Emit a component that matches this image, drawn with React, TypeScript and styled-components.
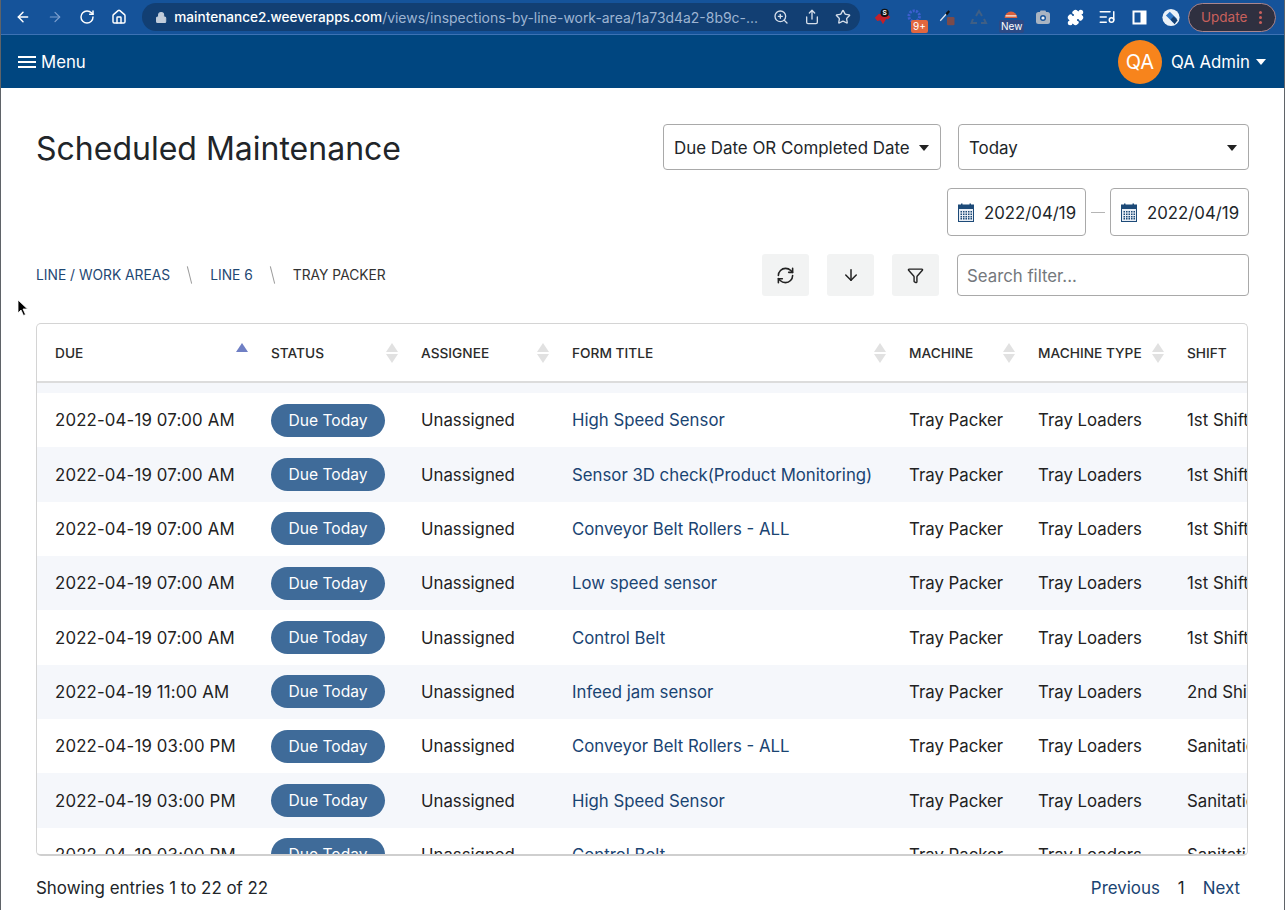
import styled, { createGlobalStyle } from 'styled-components';
import {
    ArrowDown,
    ArrowLeft,
    ArrowRight,
    Filter,
    Home,
    ListMusic,
    Lock,
    Puzzle,
    RefreshCw,
    RotateCw,
    Share,
    Star,
    ZoomIn,
} from 'lucide-react';

const GlobalStyle = createGlobalStyle`
    html, body {
        margin: 0;
        height: 910px;
        overflow: hidden;
        background: #fff;
        font-family: Inter, "Liberation Sans", sans-serif;
        color: #212529;
    }
    * { box-sizing: border-box; }
`;

const Frame = styled.div`
    position: relative;
    width: 1285px;
    height: 910px;
    border-left: 1px solid #5f6368;
    border-right: 1px solid #5f6368;
    overflow: hidden;
`;

const BrowserBar = styled.div`
    height: 35px;
    background: #15539a;
    border-bottom: 1px solid #3d72b4;
    display: flex;
    align-items: center;
    padding-left: 14px;
    color: #fff;
`;

const NavIcon = styled.span<{ $dim?: boolean }>`
    width: 16px;
    height: 16px;
    margin-right: 16px;
    display: flex;
    color: ${(p) => (p.$dim ? '#7c9fcf' : '#fff')};
`;

const Omnibox = styled.div`
    width: 718px;
    height: 28px;
    margin-left: -1px;
    margin-right: 14px;
    border-radius: 14px;
    background: #123f73;
    display: flex;
    align-items: center;
    padding: 0 9px 0 13px;
    font-size: 13.6px;
    white-space: nowrap;
    font-weight: 500;
`;

const Host = styled.span`
    margin-left: 7px;
    color: #fff;
`;

const UrlPath = styled.span`
    flex: 1;
    color: #9db4d2;
    font-size: 13.95px;
    font-weight: 400;
`;

const OmniIcon = styled.span`
    display: flex;
    margin-left: 15px;
    color: #d5deea;
`;

const ExtSlot = styled.span`
    position: relative;
    width: 18px;
    height: 18px;
    margin-right: 14px;
    display: flex;
    align-items: center;
    justify-content: center;
    flex-shrink: 0;
`;

const ExtBadge = styled.span<{ $bg: string; $left: number }>`
    position: absolute;
    left: ${(p) => p.$left}px;
    top: 12px;
    padding: 0 2px;
    border-radius: 2px;
    background: ${(p) => p.$bg};
    color: #fff;
    font-size: 10px;
    line-height: 13px;
    white-space: nowrap;
`;

const UpdateButton = styled.div`
    width: 88px;
    height: 29px;
    margin-left: -6px;
    border: 1.5px solid #a9868e;
    border-radius: 15px;
    background: #2f3040;
    color: #c9605c;
    font-size: 13.5px;
    display: flex;
    align-items: center;
    justify-content: space-between;
    padding: 0 13px 0 12px;
`;

const Dots = styled.span`
    width: 3px;
    height: 3px;
    border-radius: 50%;
    background: #c9605c;
    box-shadow: 0 -5px 0 #c9605c, 0 5px 0 #c9605c;
`;

const TopNav = styled.nav`
    height: 53px;
    background: #004680;
    color: #fff;
    display: flex;
    align-items: center;
    justify-content: space-between;
    padding: 0 18px 0 17px;
    font-size: 16.8px;
`;

const MenuToggle = styled.div`
    display: flex;
    align-items: center;
    gap: 5px;
`;

const Burger = styled.span`
    width: 18px;
    height: 12px;
    border-top: 2px solid #fff;
    border-bottom: 2px solid #fff;
    position: relative;
    &::after {
        content: '';
        position: absolute;
        left: 0;
        right: 0;
        top: 3px;
        height: 2px;
        background: #fff;
    }
`;

const UserBox = styled.div`
    display: flex;
    align-items: center;
`;

const Avatar = styled.span`
    width: 44px;
    height: 44px;
    border-radius: 50%;
    background: #f7841c;
    display: flex;
    align-items: center;
    justify-content: center;
    font-size: 20px;
    margin-right: 9px;
`;

const Caret = styled.span<{ $color?: string }>`
    width: 0;
    height: 0;
    border-left: 5.5px solid transparent;
    border-right: 5.5px solid transparent;
    border-top: 6px solid ${(p) => p.$color ?? '#fff'};
`;

const UserCaret = styled(Caret)`
    margin-left: 6px;
`;

const Main = styled.main`
    padding: 36px 35px 0 35px;
`;

const Heading = styled.div`
    display: flex;
    justify-content: space-between;
    align-items: flex-start;
`;

const Title = styled.h1`
    margin: 1px 0 0;
    font-size: 32px;
    line-height: 48px;
    font-weight: 400;
`;

const Filters = styled.div`
    display: flex;
    flex-direction: column;
    align-items: flex-end;
    gap: 18px;
`;

const FilterRow = styled.div`
    display: flex;
    gap: 17px;
`;

const SelectBox = styled.div<{ $width: number }>`
    width: ${(p) => p.$width}px;
    height: 46px;
    border: 1px solid #a9a9a9;
    border-radius: 4px;
    display: flex;
    align-items: center;
    justify-content: space-between;
    padding: 1px 11px 0 10px;
    font-size: 16.9px;
    white-space: nowrap;
`;

const DateRow = styled.div`
    display: flex;
    align-items: center;
    gap: 5px;
`;

const DateBox = styled.div`
    width: 139px;
    height: 48px;
    border: 1px solid #a9a9a9;
    border-radius: 4px;
    display: flex;
    align-items: center;
    gap: 10px;
    padding: 1px 0 0 10px;
    font-size: 16.8px;
`;

const Dash = styled.span`
    width: 14px;
    height: 1px;
    background: #b5b5b5;
`;

const Toolbar = styled.div`
    display: flex;
    justify-content: space-between;
    align-items: center;
    margin-top: 18px;
`;

const Crumbs = styled.div`
    display: flex;
    align-items: center;
    font-size: 13.8px;
    text-transform: uppercase;
`;

const Crumb = styled.span<{ $link?: boolean }>`
    color: ${(p) => (p.$link ? '#1f4873' : '#333')};
`;

const CrumbSep = styled.span`
    width: 1px;
    height: 18px;
    margin: 0 20px 0 19px;
    background: #9a9a9a;
    transform: rotate(-14deg);
`;

const Actions = styled.div`
    display: flex;
    align-items: center;
`;

const IconButton = styled.div`
    width: 47px;
    height: 42px;
    margin-right: 18px;
    border-radius: 3px;
    background: #f2f3f3;
    display: flex;
    align-items: center;
    justify-content: center;
    color: #222;
`;

const SearchBox = styled.div`
    width: 292px;
    height: 42px;
    border: 1px solid #a9a9a9;
    border-radius: 4px;
    display: flex;
    align-items: center;
    padding: 1px 0 0 9px;
    font-size: 16.8px;
    color: #74787c;
`;

const TableWrap = styled.div`
    margin-top: 27px;
    width: 1212px;
    height: 533px;
    border: 1px solid #d4d4d4;
    border-bottom: 2px solid #cfcfcf;
    border-radius: 5px;
    overflow: hidden;
`;

const GridTable = styled.table`
    table-layout: fixed;
    width: 1282px;
    border-collapse: collapse;
`;

const HeadCell = styled.th<{ $width: number }>`
    width: ${(p) => p.$width}px;
    height: 58px;
    padding: 0 5px 0 18px;
    font-size: 13.7px;
    font-weight: 500;
    text-align: left;
    color: #2b2b2b;
    border-bottom: 2px solid #dcdcdc;
`;

const HeadInner = styled.div`
    display: flex;
    align-items: center;
    justify-content: space-between;
    white-space: nowrap;
`;

const SortIcon = styled.span`
    display: flex;
    flex-direction: column;
    gap: 2px;
    width: 12px;
    flex-shrink: 0;
`;

const SortArrow = styled.span<{ $color: string; $down?: boolean; $hidden?: boolean }>`
    width: 0;
    height: 0;
    border-left: 6px solid transparent;
    border-right: 6px solid transparent;
    visibility: ${(p) => (p.$hidden ? 'hidden' : 'visible')};
    ${(p) =>
        p.$down
            ? `border-top: 9px solid ${p.$color};`
            : `border-bottom: 9px solid ${p.$color};`}
`;

const Spacer = styled.td`
    height: 11px;
    padding: 0;
    background: #f5f7fb;
`;

const Row = styled.tr<{ $striped: boolean }>`
    height: 54.35px;
    background: ${(p) => (p.$striped ? '#f5f7fb' : '#fff')};
`;

const Cell = styled.td`
    padding: 0 0 0 18px;
    font-size: 16.8px;
    white-space: nowrap;
    overflow: hidden;
    color: #222;
`;

const DueCell = styled(Cell)`
    letter-spacing: 0.16px;
`;

const StatusPill = styled.span`
    display: block;
    width: 114px;
    height: 33px;
    border-radius: 17px;
    background: #3f6b99;
    color: #fff;
    text-align: center;
    line-height: 33px;
    font-size: 15.6px;
`;

const TitleLink = styled.span`
    color: #1a4472;
`;

const Footer = styled.footer`
    display: flex;
    justify-content: space-between;
    align-items: center;
    margin-top: 22px;
    font-size: 16.9px;
`;

const Pager = styled.div`
    display: flex;
    gap: 18px;
    padding-right: 9px;
`;

const PageLink = styled.span`
    color: #1a4472;
`;

const Pointer = styled.svg`
    position: absolute;
    left: 16px;
    top: 299px;
`;

type Column = { label: string; width: number; sortable?: boolean; active?: boolean };

const columns: Column[] = [
    { label: 'DUE', width: 216, active: true },
    { label: 'STATUS', width: 150, sortable: true },
    { label: 'ASSIGNEE', width: 151, sortable: true },
    { label: 'FORM TITLE', width: 337, sortable: true },
    { label: 'MACHINE', width: 129, sortable: true },
    { label: 'MACHINE TYPE', width: 149, sortable: true },
    { label: 'SHIFT', width: 150 },
];

const rows = [
    ['2022-04-19 07:00 AM', 'High Speed Sensor', '1st Shift'],
    ['2022-04-19 07:00 AM', 'Sensor 3D check(Product Monitoring)', '1st Shift'],
    ['2022-04-19 07:00 AM', 'Conveyor Belt Rollers - ALL', '1st Shift'],
    ['2022-04-19 07:00 AM', 'Low speed sensor', '1st Shift'],
    ['2022-04-19 07:00 AM', 'Control Belt', '1st Shift'],
    ['2022-04-19 11:00 AM', 'Infeed jam sensor', '2nd Shift'],
    ['2022-04-19 03:00 PM', 'Conveyor Belt Rollers - ALL', 'Sanitation'],
    ['2022-04-19 03:00 PM', 'High Speed Sensor', 'Sanitation'],
    ['2022-04-19 03:00 PM', 'Control Belt', 'Sanitation'],
    ['2022-04-19 03:00 PM', 'Low speed sensor', 'Sanitation'],
];

const CalendarIcon = () => (
    <svg width="16" height="19" viewBox="0 0 16 19">
        <rect x="0.5" y="2" width="15" height="16.5" fill="#e9eef5" stroke="#1d4a78" />
        <rect x="0.5" y="2" width="15" height="4" fill="#1d4a78" />
        <rect x="3" y="0.5" width="1.5" height="3" fill="#1d4a78" />
        <rect x="11.5" y="0.5" width="1.5" height="3" fill="#1d4a78" />
        {[8, 10.5, 13, 15].map((y) =>
            [2.5, 5, 7.5, 10, 12.5].map((x) => (
                <rect key={`${x}-${y}`} x={x} y={y} width="1.5" height="1.5" fill="#1d4a78" />
            )),
        )}
    </svg>
);

const Extensions = () => (
    <>
        <ExtSlot>
            <svg width="22" height="22" viewBox="0 0 22 22">
                <path d="M1 12 L6 7 L10 8 L14 6 L20 11 L17 14 L15 13 L11 20 L8 15 L4 16 Z" fill="#c3202a" />
                <circle cx="13" cy="6" r="5" fill="#111" />
                <text x="13" y="9" fontSize="8" fontWeight="700" fill="#fff" textAnchor="middle">S</text>
            </svg>
        </ExtSlot>
        <ExtSlot>
            <svg width="22" height="22" viewBox="0 0 22 22">
                <circle cx="10" cy="10" r="6.5" fill="none" stroke="#3d5fd0" strokeWidth="3.5" strokeDasharray="2.6 1.4" />
            </svg>
            <ExtBadge $bg="#e0673f" $left={5}>9+</ExtBadge>
        </ExtSlot>
        <ExtSlot>
            <svg width="24" height="24" viewBox="0 0 24 24">
                <path d="M3 17 L11 8" stroke="#dfe6ef" strokeWidth="1.6" />
                <path d="M10 7 L14 3 L16 5 L12 10 Z" fill="#111" />
                <rect x="12" y="12" width="10" height="11" rx="1.5" fill="#7a4b4b" />
            </svg>
        </ExtSlot>
        <ExtSlot>
            <svg width="18" height="18" viewBox="0 0 18 18" fill="none" stroke="#3f5f85" strokeWidth="2">
                <path d="M6 8 L9 3 L12 8" />
                <path d="M3 11 L1.5 15 H7" />
                <path d="M11 15 H16 L14 11" />
            </svg>
        </ExtSlot>
        <ExtSlot>
            <svg width="20" height="20" viewBox="0 0 20 20">
                <path d="M3 11 A7 7 0 0 1 17 11 Z" fill="#d8603c" />
                <rect x="4" y="8" width="12" height="1.5" fill="#f2e6dc" />
            </svg>
            <ExtBadge $bg="#2c4a85" $left={-3}>New</ExtBadge>
        </ExtSlot>
        <ExtSlot>
            <svg width="18" height="18" viewBox="0 0 18 18">
                <rect x="2" y="4" width="14" height="12" rx="2.5" fill="#a9b4c2" />
                <rect x="6" y="2.5" width="6" height="3" rx="1" fill="#a9b4c2" />
                <circle cx="9" cy="10" r="3" fill="#15539a" />
                <circle cx="9" cy="10" r="1.6" fill="#eef1f5" />
            </svg>
        </ExtSlot>
        <ExtSlot>
            <Puzzle size={17} color="#fff" fill="#fff" />
        </ExtSlot>
        <ExtSlot>
            <ListMusic size={18} color="#fff" />
        </ExtSlot>
        <ExtSlot>
            <svg width="15" height="15" viewBox="0 0 15 15">
                <rect x="0.5" y="0.5" width="14" height="14" fill="#fff" />
                <rect x="2.5" y="2.5" width="6" height="10" fill="#15539a" />
            </svg>
        </ExtSlot>
        <ExtSlot>
            <svg width="23" height="23" viewBox="0 0 23 23">
                <circle cx="11.5" cy="11.5" r="11" fill="#eaf1f8" />
                <path d="M5 9 L10 4 L19 13 L14 18 Z" fill="#2f76c4" />
                <path d="M11 14 L15 10 L20 15 L16 20 Z" fill="#123f73" />
            </svg>
        </ExtSlot>
    </>
);

const App = () => (
    <Frame>
        <GlobalStyle />
        <BrowserBar>
            <NavIcon><ArrowLeft size={16} strokeWidth={2.2} /></NavIcon>
            <NavIcon $dim><ArrowRight size={16} strokeWidth={1.8} /></NavIcon>
            <NavIcon><RotateCw size={16} strokeWidth={2.2} /></NavIcon>
            <NavIcon><Home size={16} strokeWidth={2.2} /></NavIcon>
            <Omnibox>
                <Lock size={13} color="#c2cddb" fill="#c2cddb" />
                <Host>maintenance2.weeverapps.com</Host>
                <UrlPath>/views/inspections-by-line-work-area/1a73d4a2-8b9c-...</UrlPath>
                <OmniIcon><ZoomIn size={16} /></OmniIcon>
                <OmniIcon><Share size={16} /></OmniIcon>
                <OmniIcon><Star size={16} /></OmniIcon>
            </Omnibox>
            <Extensions />
            <UpdateButton>Update<Dots /></UpdateButton>
        </BrowserBar>

        <TopNav>
            <MenuToggle><Burger />Menu</MenuToggle>
            <UserBox>
                <Avatar>QA</Avatar>
                QA Admin
                <UserCaret />
            </UserBox>
        </TopNav>

        <Main>
            <Heading>
                <Title>Scheduled Maintenance</Title>
                <Filters>
                    <FilterRow>
                        <SelectBox $width={278}>
                            Due Date OR Completed Date
                            <Caret $color="#222" />
                        </SelectBox>
                        <SelectBox $width={291}>
                            Today
                            <Caret $color="#222" />
                        </SelectBox>
                    </FilterRow>
                    <DateRow>
                        <DateBox><CalendarIcon />2022/04/19</DateBox>
                        <Dash />
                        <DateBox><CalendarIcon />2022/04/19</DateBox>
                    </DateRow>
                </Filters>
            </Heading>

            <Toolbar>
                <Crumbs>
                    <Crumb $link>Line / Work Areas</Crumb>
                    <CrumbSep />
                    <Crumb $link>Line 6</Crumb>
                    <CrumbSep />
                    <Crumb>Tray Packer</Crumb>
                </Crumbs>
                <Actions>
                    <IconButton><RefreshCw size={19} /></IconButton>
                    <IconButton><ArrowDown size={18} /></IconButton>
                    <IconButton><Filter size={17} /></IconButton>
                    <SearchBox>Search filter...</SearchBox>
                </Actions>
            </Toolbar>

            <TableWrap>
                <GridTable>
                    <thead>
                        <tr>
                            {columns.map((col) => (
                                <HeadCell key={col.label} $width={col.width}>
                                    <HeadInner>
                                        {col.label}
                                        {col.sortable && (
                                            <SortIcon>
                                                <SortArrow $color="#e1e1e1" />
                                                <SortArrow $color="#e1e1e1" $down />
                                            </SortIcon>
                                        )}
                                        {col.active && (
                                            <SortIcon>
                                                <SortArrow $color="#6f7fc4" />
                                                <SortArrow $color="#fff" $down $hidden />
                                            </SortIcon>
                                        )}
                                    </HeadInner>
                                </HeadCell>
                            ))}
                        </tr>
                    </thead>
                    <tbody>
                        <tr><Spacer colSpan={7} /></tr>
                        {rows.map((row, i) => (
                            <Row key={i} $striped={i % 2 === 1}>
                                <DueCell>{row[0]}</DueCell>
                                <Cell><StatusPill>Due Today</StatusPill></Cell>
                                <Cell>Unassigned</Cell>
                                <Cell><TitleLink>{row[1]}</TitleLink></Cell>
                                <Cell>Tray Packer</Cell>
                                <Cell>Tray Loaders</Cell>
                                <Cell>{row[2]}</Cell>
                            </Row>
                        ))}
                    </tbody>
                </GridTable>
            </TableWrap>

            <Footer>
                <span>Showing entries 1 to 22 of 22</span>
                <Pager>
                    <PageLink>Previous</PageLink>
                    <span>1</span>
                    <PageLink>Next</PageLink>
                </Pager>
            </Footer>
        </Main>

        <Pointer width="12" height="18" viewBox="0 0 12 18">
            <path d="M1 1 L1 14 L4 11 L6.5 16.5 L8.5 15.5 L6 10 L10.5 10 Z" fill="#000" stroke="#fff" strokeWidth="0.8" />
        </Pointer>
    </Frame>
);

export default App;
